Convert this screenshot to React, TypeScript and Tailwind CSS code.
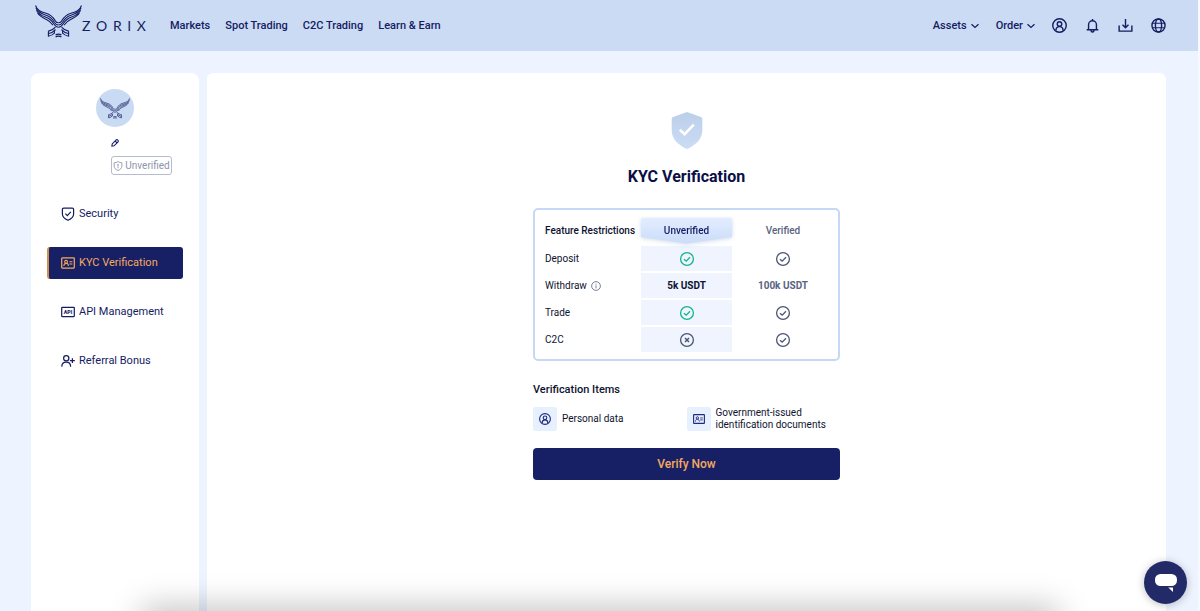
import type { ReactNode, SVGProps } from 'react';
import { clsx } from 'clsx';

type IconProps = SVGProps<SVGSVGElement>;

function Icon({ children, strokeWidth = 1.5, ...props }: IconProps) {
	return (
		<svg
			viewBox="0 0 16 16"
			fill="none"
			stroke="currentColor"
			strokeWidth={strokeWidth}
			aria-hidden="true"
			{...props}
		>
			{children}
		</svg>
	);
}

function EagleLogo({ strokeWidth = 1.1, ...props }: IconProps) {
	const half = (
		<>
			<path d="M0.5 0.5C2 5.5 6 6.8 11 8.2C16 9.6 18 12 20 15.4C21 17.2 22 17.8 23.5 17.8" />
			<path d="M0.9 2.8C2.8 7.4 6.4 8.8 11 10.2C15.6 11.6 17.6 14 19.4 17.2C20.6 19.2 22 20 23.5 20" />
			<path d="M1.4 5.2C3.6 9.4 7 10.8 11 12.2C15 13.6 17 15.8 18.8 18.8C20.2 21.2 22 22.2 23.5 22.2" />
			<path d="M2.6 8C5 11.6 8 12.8 11 14.2C14.4 15.8 16.4 17.6 18 20.2" />
			<path d="M13 26.4C16 25.8 18.6 24.4 20.4 22.2" />
			<path d="M13 28.8C16 28.2 18.6 26.8 20.6 24.6" />
			<path d="M13.4 31.2C16 30.8 18 29.8 19.4 28" />
			<path d="M13.4 26.4V31.4M19.4 24.8V28.6" />
		</>
	);

	return (
		<svg
			viewBox="0 0 47 33"
			fill="none"
			stroke="currentColor"
			strokeWidth={strokeWidth}
			aria-hidden="true"
			{...props}
		>
			{half}
			<g transform="matrix(-1 0 0 1 47 0)">{half}</g>
			<path d="M20.6 30C22 28.8 25 28.8 26.4 30M20.6 32C22 30.8 25 30.8 26.4 32" />
		</svg>
	);
}

function UserCircleIcon(props: IconProps) {
	return (
		<Icon {...props}>
			<circle cx="8" cy="8" r="7.2" />
			<circle cx="8" cy="6.4" r="2.4" />
			<path d="M4.2 13.4C4.2 10.8 5.6 9.2 8 9.2S11.8 10.8 11.8 13.4" />
		</Icon>
	);
}

function BellIcon(props: IconProps) {
	return (
		<Icon {...props}>
			<path d="M1.8 12.6H14.2M3.8 12.4V7.2A4.2 4.2 0 0 1 12.2 7.2V12.4M8 3V1M6.4 13C6.4 15.6 9.6 15.6 9.6 13" />
		</Icon>
	);
}

function DownloadIcon(props: IconProps) {
	return (
		<Icon {...props}>
			<path d="M1.2 8V14H14.8V8M8 1V10.2M4.8 7.2L8 10.4L11.2 7.2" />
		</Icon>
	);
}

function GlobeIcon(props: IconProps) {
	return (
		<Icon {...props}>
			<circle cx="8" cy="8" r="7" />
			<ellipse cx="8" cy="8" rx="3.3" ry="7" />
			<path d="M1.6 5.6H14.4M1.6 10.4H14.4" strokeWidth="1.3" />
		</Icon>
	);
}

function ChevronIcon(props: IconProps) {
	return (
		<Icon {...props}>
			<path d="M1 4.5L8 11L15 4.5" />
		</Icon>
	);
}

function PencilIcon(props: IconProps) {
	return (
		<Icon {...props}>
			<path d="M1.8 14.2L2.4 9.8L9.8 2.4C11.4 0.9 12.8 1.4 13.7 2.3C14.6 3.2 15.1 4.6 13.6 6.2L6.2 13.6ZM8 3.8L12.2 8" />
		</Icon>
	);
}

function ShieldAlertIcon(props: IconProps) {
	return (
		<Icon {...props}>
			<path d="M8 1C6.2 2.3 4 2.8 1.8 2.8V8C1.8 11.4 4.4 13.8 8 15.2C11.6 13.8 14.2 11.4 14.2 8V2.8C12 2.8 9.8 2.3 8 1Z" />
			<path d="M8 4.6V8.8M8 10V11.6" strokeWidth="1.8" />
		</Icon>
	);
}

function ShieldCheckIcon(props: IconProps) {
	return (
		<Icon {...props}>
			<path d="M3 1.4H13C13.8 1.4 14.4 1.9 14.4 2.8V8C14.4 11.6 11.6 13.6 8 15.2C4.4 13.6 1.6 11.6 1.6 8V2.8C1.6 1.9 2.2 1.4 3 1.4Z" />
			<path d="M5 7.6L7.2 9.8L11.2 5.6" />
		</Icon>
	);
}

function IdCardIcon(props: IconProps) {
	return (
		<Icon {...props}>
			<rect x="0.8" y="2.2" width="14.4" height="11.6" rx="0.6" />
			<g strokeWidth="1.2">
				<circle cx="5.8" cy="6.6" r="1.6" />
				<path d="M3.2 11.4C3.2 9.4 4.2 8.4 5.8 8.4S8.4 9.4 8.4 11.4M9.6 6.6H13M9.6 9.2H13" />
			</g>
		</Icon>
	);
}

function ApiIcon(props: IconProps) {
	return (
		<Icon {...props}>
			<rect x="0.8" y="2.8" width="14.4" height="10.4" rx="0.6" />
			<text
				x="8"
				y="10.2"
				textAnchor="middle"
				fill="currentColor"
				stroke="none"
				fontSize="6"
				fontWeight="900"
			>
				API
			</text>
		</Icon>
	);
}

function UserPlusIcon(props: IconProps) {
	return (
		<Icon {...props}>
			<circle cx="6" cy="4.8" r="3" />
			<path d="M0.9 14.6C0.9 11 2.8 9.4 6 9.4S11 11 11 14.6M13 4.8V10.4M10.2 7.6H15.8" />
		</Icon>
	);
}

function CheckCircle(props: IconProps) {
	return (
		<Icon role="img" aria-hidden={false} aria-label="Available" {...props}>
			<circle cx="8" cy="8" r="6.4" strokeWidth="1.3" />
			<path d="M5 8.2L7.2 10.2L11 6.2" strokeWidth="1.3" />
		</Icon>
	);
}

function CrossCircle(props: IconProps) {
	return (
		<Icon role="img" aria-hidden={false} aria-label="Not available" {...props}>
			<circle cx="8" cy="8" r="6.4" strokeWidth="1.3" />
			<path d="M6 6L10 10M10 6L6 10" />
		</Icon>
	);
}

function InfoIcon(props: IconProps) {
	return (
		<Icon {...props}>
			<circle cx="8" cy="8" r="7" />
			<path d="M8 4.2V5.8M8 7.2V11.8" />
		</Icon>
	);
}

const navLinks = ['Markets', 'Spot Trading', 'C2C Trading', 'Learn & Earn'];

const menu = [
	{ label: 'Security', icon: ShieldCheckIcon },
	{ label: 'KYC Verification', icon: IdCardIcon, active: true },
	{ label: 'API Management', icon: ApiIcon },
	{ label: 'Referral Bonus', icon: UserPlusIcon },
];

const green = <CheckCircle className="size-4 text-[#12b48b]" />;
const gray = <CheckCircle className="size-4 text-[#4b5672]" />;

const restrictions: { label: string; info?: boolean; unverified: ReactNode; verified: ReactNode }[] = [
	{ label: 'Deposit', unverified: green, verified: gray },
	{ label: 'Withdraw', info: true, unverified: '5k USDT', verified: '100k USDT' },
	{ label: 'Trade', unverified: green, verified: gray },
	{ label: 'C2C', unverified: <CrossCircle className="size-4 text-[#4b5672]" />, verified: gray },
];

function Header() {
	return (
		<header className="flex h-[51px] items-center justify-between bg-[#cbdbf3] pl-[35px] pr-8 text-[11px] leading-4 font-medium">
			<div className="flex items-center">
				<a href="#" aria-label="Zorix" className="flex items-center pb-2">
					<EagleLogo className="h-[33px] w-[47px]" />
					<span className="flex w-16 justify-between pt-2 font-[Lato] text-sm font-normal">
						<span>Z</span>
						<span>O</span>
						<span>R</span>
						<span>I</span>
						<span>X</span>
					</span>
				</a>
				<nav className="ml-6 flex gap-[15px]">
					{navLinks.map((link) => (
						<a key={link} href="#">
							{link}
						</a>
					))}
				</nav>
			</div>
			<div className="flex items-center">
				<button className="mr-[17px] flex items-center gap-1">
					Assets
					<ChevronIcon className="size-2" strokeWidth={2.4} />
				</button>
				<button className="mr-[17px] flex items-center gap-1">
					Order
					<ChevronIcon className="size-2" strokeWidth={2.4} />
				</button>
				<div className="flex items-center gap-[18px]">
					<button aria-label="Account">
						<UserCircleIcon className="size-[15px]" />
					</button>
					<button aria-label="Notifications">
						<BellIcon className="size-[15px]" />
					</button>
					<button aria-label="Download">
						<DownloadIcon className="size-[15px]" />
					</button>
					<button aria-label="Language">
						<GlobeIcon className="size-[15px]" />
					</button>
				</div>
			</div>
		</header>
	);
}

function Sidebar() {
	return (
		<aside className="w-[168px] shrink-0 rounded-t-lg bg-white px-4 pt-4">
			<div className="flex flex-col items-center">
				<div className="flex size-[38px] items-center justify-center rounded-full bg-[#c9dbf3]">
					<EagleLogo className="h-[21px] w-[30px] text-[#4c5891]" strokeWidth={1.5} />
				</div>
				<button aria-label="Edit nickname" className="mt-3">
					<PencilIcon className="size-2" strokeWidth={2.2} />
				</button>
			</div>
			<div className="mt-[9px] ml-16 flex h-[19px] w-[61px] items-center justify-center gap-0.5 rounded-[3px] border border-[#b5bccb] text-[10px] leading-[15px] text-[#8b95ab]">
				<ShieldAlertIcon className="size-2.5" strokeWidth={1.4} />
				Unverified
			</div>
			<nav className="mt-[23px] flex flex-col gap-[17px] text-[11px] leading-4">
				{menu.map(({ label, icon: MenuIcon, active }) => (
					<a
						key={label}
						href="#"
						className={clsx(
							'flex h-8 items-center gap-1 rounded-[3px] border-l-2 pl-3',
							active ? 'border-[#d18f4e] bg-[#182065] text-[#f5a95f]' : 'border-transparent'
						)}
					>
						<MenuIcon className="size-3.5" strokeWidth={1.4} />
						{label}
					</a>
				))}
			</nav>
		</aside>
	);
}

function RestrictionsTable() {
	return (
		<div className="mt-[19px] rounded-[5px] border-2 border-[#c5d8f5] p-1.5 text-[#0e1330]">
			<table className="w-full table-fixed text-[10px] leading-[15px]">
				<colgroup>
					<col className="w-[100px]" />
					<col className="w-[91px]" />
					<col />
				</colgroup>
				<thead>
					<tr className="h-[29px]">
						<th className="pl-1 text-left font-medium whitespace-nowrap">Feature Restrictions</th>
						<th className="p-0 font-medium text-[#151c63]">
							<div className="drop-shadow-[0_1px_2px_rgba(120,150,200,0.35)]">
								<div className="h-[26px] rounded-t-xs bg-linear-to-b from-[#e3edfe] to-[#c9dcfa] pt-[5px] [clip-path:polygon(0_0,100%_0,100%_75%,50%_100%,0_75%)]">
									Unverified
								</div>
							</div>
						</th>
						<th className="p-0 pl-0.5 font-medium text-[#5a6480]">Verified</th>
					</tr>
				</thead>
				<tbody>
					{restrictions.map(({ label, info, unverified, verified }) => (
						<tr key={label} className="h-[27px]">
							<th className="pl-1 text-left font-normal">
								<span className="flex items-center gap-1">
									{label}
									{info && <InfoIcon className="size-2.5 text-[#5a6480]" strokeWidth={1.3} />}
								</span>
							</th>
							<td className="p-0">
								<div className="flex h-[25px] items-center justify-center bg-[#eff4fe] font-bold">
									{unverified}
								</div>
							</td>
							<td className="p-0 pl-0.5 font-bold text-[#5a6480]">
								<div className="flex justify-center">{verified}</div>
							</td>
						</tr>
					))}
				</tbody>
			</table>
		</div>
	);
}

function VerificationItem({ icon, children }: { icon: ReactNode; children: ReactNode }) {
	return (
		<li className="flex flex-1 items-center gap-[5px]">
			<span className="flex size-6 shrink-0 items-center justify-center rounded-xs bg-[#e6f0fe] text-[#232b80]">
				{icon}
			</span>
			{children}
		</li>
	);
}

export default function App() {
	return (
		<div className="flex min-h-screen flex-col border-r-2 border-[#f6f9fe] bg-[#edf4ff] font-[Roboto,sans-serif] text-[#151c63]">
			<Header />
			<div className="flex flex-1 gap-2 pt-[22px] pr-8 pl-[31px]">
				<Sidebar />
				<main className="flex flex-1 justify-center rounded-t-md bg-white pt-[38px] pb-8">
					<div className="w-[307px]">
						<svg viewBox="0 0 32 38" className="mx-auto h-[38px] w-8" aria-hidden="true">
							<defs>
								<linearGradient id="shield" x1="0" y1="0" x2="0" y2="1">
									<stop offset="0" stopColor="#bccfea" />
									<stop offset="1" stopColor="#cbdcf4" />
								</linearGradient>
							</defs>
							<path
								d="M16 1L30 6Q31.3 6.5 31.3 8V19C31.3 28 25 34 16 38C7 34 0.7 28 0.7 19V8Q0.7 6.5 2 6Z"
								fill="url(#shield)"
							/>
							<path d="M8.8 18.8L13.6 23.2L22.8 13.6" fill="none" stroke="#fff" strokeWidth="2.6" />
						</svg>
						<h1 className="mt-4 text-center text-base font-bold text-[#0b0f45]">
							KYC Verification
						</h1>
						<RestrictionsTable />
						<h2 className="mt-[21px] text-[11px] leading-4 font-medium text-[#0e1330]">
							Verification Items
						</h2>
						<ul className="mt-[9px] flex text-[10px] leading-3 text-[#0e1330]">
							<VerificationItem icon={<UserCircleIcon className="size-3" />}>
								Personal data
							</VerificationItem>
							<VerificationItem icon={<IdCardIcon className="size-3" />}>
								<span>
									Government-issued
									<br />
									identification documents
								</span>
							</VerificationItem>
						</ul>
						<button className="mt-[17px] h-8 w-full rounded-sm bg-[#182065] text-xs font-medium text-[#f5a95f]">
							Verify Now
						</button>
					</div>
				</main>
			</div>
			<div className="pointer-events-none fixed inset-x-[150px] -bottom-5 h-4 shadow-[0_0_32px_8px_rgba(0,0,0,0.25)]" />
			<button
				aria-label="Open chat"
				className="fixed right-[13px] bottom-[7px] flex size-[43px] items-center justify-center rounded-full bg-[#232a68] shadow-[0_1px_8px_rgba(0,0,0,0.25)]"
			>
				<svg viewBox="0 0 24 20" className="h-5 w-6" fill="#fff" aria-hidden="true">
					<rect x="1" y="1" width="22" height="12" rx="5.5" />
					<path d="M14.2 14.4H19V19Z" />
				</svg>
			</button>
		</div>
	);
}
